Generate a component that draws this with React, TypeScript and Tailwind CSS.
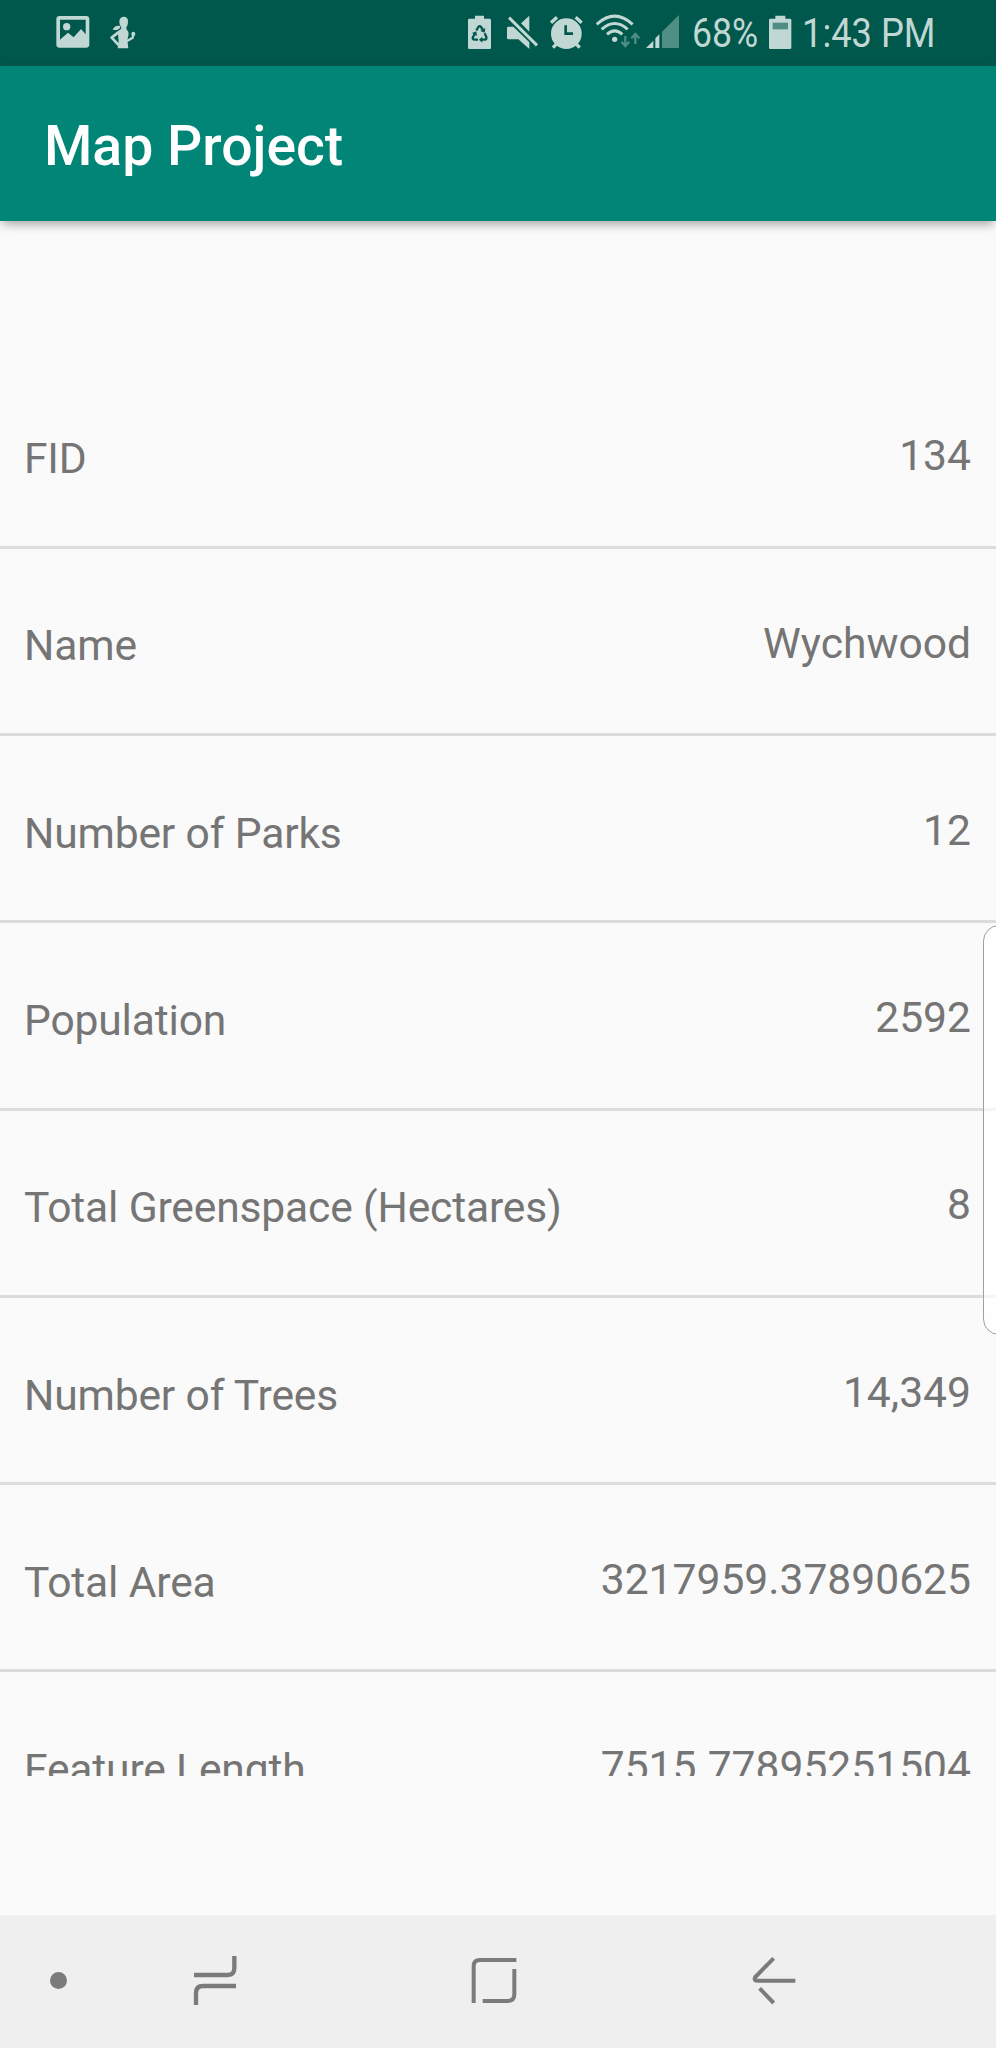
import React, { FC } from 'react';

interface RowProps {
  label: string;
  value: string;
}

const rows: RowProps[] = [
  { label: 'FID', value: '134' },
  { label: 'Name', value: 'Wychwood' },
  { label: 'Number of Parks', value: '12' },
  { label: 'Population', value: '2592' },
  { label: 'Total Greenspace (Hectares)', value: '8' },
  { label: 'Number of Trees', value: '14,349' },
  { label: 'Total Area', value: '3217959.37890625' },
  { label: 'Feature Length', value: '7515.77895251504' },
];

const PictureIcon: FC = () => (
  <svg className="w-[34px] h-[66px]" viewBox="168 0 102 198" fill="currentColor">
    <rect x="174.5" y="53.5" width="88" height="84" rx="4" fill="none" stroke="currentColor" strokeWidth="11" />
    <circle cx="200" cy="80" r="11" />
    <path d="M178 121 204 98l17 14 22-25 16 18v34h-81Z" />
  </svg>
);

const CoachIcon: FC = () => (
  <svg className="w-[26px] h-[66px]" viewBox="330 0 78 198" fill="currentColor">
    <path d="M358 64c0-9 6-14 14-14 7 0 12 5 12 13 0 7-1 14-5 19l1 7c6 4 7 11 5 18l-3 13 3 25h-32l3-22-2-20c-1-7 2-13 9-16l1-5c-4-5-6-10-6-18Z" />
    <path d="M360 78c-10-2-18 2-22 11 9 3 17 1 23-6Z" />
    <path d="M358 95 335 113l21 22" fill="none" stroke="currentColor" strokeWidth="8" strokeLinejoin="round" />
    <path d="m380 124 18-11 2-10" fill="none" stroke="currentColor" strokeWidth="7" strokeLinejoin="round" />
    <ellipse cx="400" cy="102" rx="6" ry="7" />
  </svg>
);

const BatterySaverIcon: FC = () => (
  <svg className="w-[24px] h-[66px]" viewBox="54 0 72 198">
    <path d="M75 47h27v9h17q4 0 4 4v84q0 3-4 3H58q-4 0-4-3V60q0-4 4-4h17Z" fill="currentColor" />
    <g fill="none" stroke="#00574b" strokeWidth="7" strokeLinejoin="round">
      <path d="m79 91 6-10q4-5 8 0l6 9" />
      <path d="m104 100 5 11q2 7-5 8H94" />
      <path d="M84 119H73q-7-1-4-8l6-10" />
    </g>
    <g fill="#00574b">
      <path d="m106 84-2 14-13-5Z" />
      <path d="M97 110v18l-10-9Z" />
      <path d="m66 99 13-5 2 14Z" />
    </g>
  </svg>
);

const MuteIcon: FC = () => (
  <svg className="w-[34px] h-[66px]" viewBox="168 0 102 198" fill="currentColor">
    <path d="M213 70 238 47v48Z" />
    <path d="M175 80h15l48 47v20l-33-29h-30q-4 0-4-4V84q0-4 4-4Z" />
    <path d="m177 53 84 83" stroke="currentColor" strokeWidth="9" />
  </svg>
);

const AlarmIcon: FC = () => (
  <svg className="w-[34px] h-[66px]" viewBox="300 0 102 198">
    <circle cx="349" cy="101" r="46" fill="currentColor" />
    <g fill="none" stroke="currentColor" strokeWidth="10">
      <path d="m303 68 18-16M395 68l-18-16" />
      <path d="m321 130-12 13M377 130l12 13" />
    </g>
    <path d="M347 76v25h22" fill="none" stroke="#00574b" strokeWidth="8" />
  </svg>
);

const WifiIcon: FC = () => (
  <svg className="w-[45px] h-[66px]" viewBox="438 0 135 198" fill="none">
    <g stroke="currentColor" strokeWidth="9">
      <path d="M440 73q54-49 108 0" />
      <path d="M455 88q39-35 78 0" />
      <path d="M471 103q23-21 46 0" />
    </g>
    <circle cx="494" cy="118" r="8" fill="currentColor" />
    <g stroke="#4f8e84" strokeWidth="7">
      <path d="M526 108v29m-12-12 12 13 12-13" />
      <path d="M556 132v-28m-12 11 12-13 12 13" />
    </g>
  </svg>
);

const SignalIcon: FC = () => (
  <svg className="w-[35px] h-[66px]" viewBox="585 0 105 198">
    <path d="M636 95 687 45v99h-51Z" fill="#4f8e84" />
    <path d="m588 144 22-22v22ZM616 115l12-12v41h-12Z" fill="currentColor" />
  </svg>
);

const BatteryIcon: FC = () => (
  <svg className="w-[23px] h-[66px]" viewBox="267 0 69 198">
    <path d="M286 47h30v9h14q4 0 4 4v84q0 3-4 3h-59q-4 0-4-3V60q0-4 4-4h15Z" fill="currentColor" />
    <path d="M278 68h46v20h-46Z" fill="#4f8e84" />
  </svg>
);

const StatusBar: FC = () => (
  <div className="h-[66px] bg-[#00574b] text-[#c0d7d3] flex items-center pl-14 pr-[60px]">
    <PictureIcon />
    <div className="ml-5">
      <CoachIcon />
    </div>
    <div className="ml-auto flex items-center">
      <BatterySaverIcon />
      <div className="ml-3.5">
        <MuteIcon />
      </div>
      <div className="ml-2.5">
        <AlarmIcon />
      </div>
      <div className="ml-3">
        <WifiIcon />
      </div>
      <div className="ml-1">
        <SignalIcon />
      </div>
      <div className="ml-3 w-[65px] text-[41px] leading-[68px]">
        <span className="inline-block origin-left scale-x-[0.87] whitespace-nowrap">68%</span>
      </div>
      <div className="ml-3">
        <BatteryIcon />
      </div>
      <div className="ml-[10px] w-[134px] text-[41px] leading-[68px]">
        <span className="inline-block origin-left scale-x-[0.885] whitespace-nowrap">1:43 PM</span>
      </div>
    </div>
  </div>
);

const Row: FC<RowProps> = ({ label, value }) => (
  <div className="h-[187.27px] flex flex-col shrink-0">
    <div className="flex-1 flex justify-between pl-6 pr-[25px] text-[42.6px] leading-[50px]">
      <span className="pt-[71.7px] tracking-[-0.17px]">{label}</span>
      <span className="pt-[68.8px]">{value}</span>
    </div>
    <div className="h-[3px] bg-[#dcdcdc]" />
  </div>
);

const NavBar: FC = () => (
  <nav className="h-[133px] bg-[#efefef] text-[#7b7b7b] flex items-start">
    <div className="size-[17px] rounded-full bg-[#7b7b7b] ml-[50px] mt-[57px]" />
    <svg className="w-[44px] h-[50px] ml-[126px] mt-[41px]" viewBox="579 198 132 150" fill="none" stroke="currentColor" strokeWidth="13">
      <path d="M582 255h101q20 0 20-20v-37" />
      <path d="M708 288H609q-21 0-21 21v36" />
    </svg>
    <svg className="w-[46px] h-[46px] ml-[234px] mt-[42px]" viewBox="91 201 138 138" fill="none" stroke="currentColor" strokeWidth="12">
      <path d="M99 340V229q0-19 19-19h109" />
      <path d="M221 237v76q0 20-20 20h-75" />
    </svg>
    <svg className="w-[46px] h-[50px] ml-[234px] mt-[41px]" viewBox="930 198 138 150" fill="none" stroke="currentColor" strokeWidth="12">
      <path d="m998 205-55 56q-6 11 6 11h114" strokeLinejoin="round" />
      <path d="m956 295 42 44" />
    </svg>
  </nav>
);

const App: FC = () => (
  <div className="relative w-[996px] h-[2048px] overflow-hidden bg-[#fafafa] flex flex-col font-['Roboto',sans-serif] text-[#757575]">
    <StatusBar />
    <header className="h-[155px] bg-[#008577] shadow-[0_5px_10px_-2px_rgba(0,0,0,0.35)] flex items-center pt-1.5 pl-[44px]">
      <h1 className="text-[55.3px] leading-[64px] font-medium text-white">Map Project</h1>
    </header>

    <main className="h-[1414.5px] mt-[140.5px] overflow-hidden flex flex-col">
      {rows.map((row) => (
        <Row key={row.label} label={row.label} value={row.value} />
      ))}
    </main>

    <div className="mt-auto">
      <NavBar />
    </div>

    {/* edge panel handle, sticks out from the right side of the screen */}
    <div className="absolute top-[925px] -right-10 w-[53px] h-[410px] rounded-[16px] border border-[#a0a0a0] bg-white/70" />
  </div>
);

export default App;
